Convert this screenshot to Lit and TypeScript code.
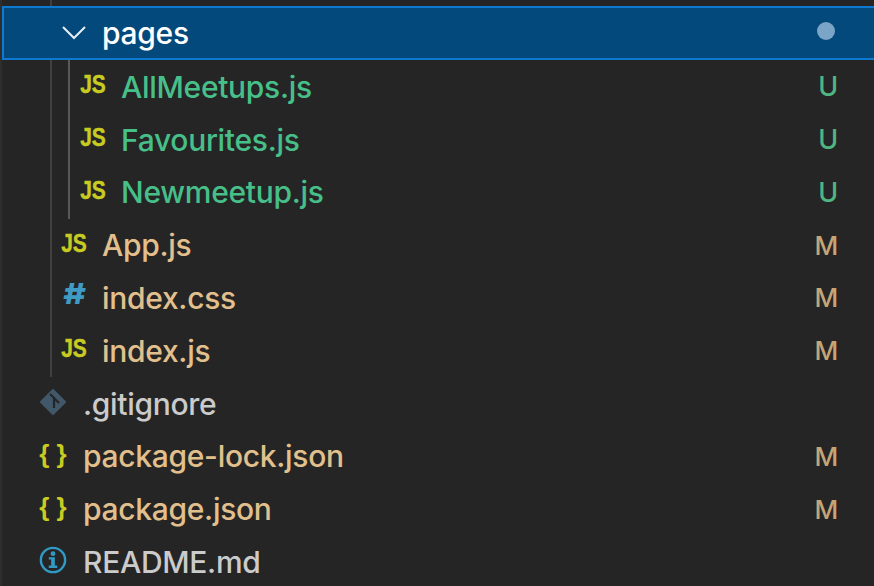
import { LitElement, html, css, nothing } from 'lit';
import { customElement } from 'lit/decorators.js';

type Row = { name: string; icon: string; tone: string; badge?: string; pad: number };

const inner: Row[] = [
  { name: 'AllMeetups.js', icon: 'js', tone: 'added', badge: 'U', pad: 78 },
  { name: 'Favourites.js', icon: 'js', tone: 'added', badge: 'U', pad: 78 },
  { name: 'Newmeetup.js', icon: 'js', tone: 'added', badge: 'U', pad: 78 },
];
const outer: Row[] = [
  { name: 'App.js', icon: 'js', tone: 'changed', badge: 'M', pad: 59 },
  { name: 'index.css', icon: 'hash', tone: 'changed', badge: 'M', pad: 59 },
  { name: 'index.js', icon: 'js', tone: 'changed', badge: 'M', pad: 59 },
];
const root: Row[] = [
  { name: '.gitignore', icon: 'git', tone: 'plain', pad: 38 },
  { name: 'package-lock.json', icon: 'json', tone: 'changed', badge: 'M', pad: 38 },
  { name: 'package.json', icon: 'json', tone: 'changed', badge: 'M', pad: 38 },
  { name: 'README.md', icon: 'info', tone: 'plain', pad: 38 },
];

@customElement('app-root')
export class AppRoot extends LitElement {
  static styles = css`
    :host {
      display: block;
      width: 874px;
      height: 586px;
      overflow: hidden;
      background: #252526;
      font-family: Inter, 'Noto Sans', sans-serif;
    }
    .tree {
      height: 586px;
      box-sizing: border-box;
      border-left: 2px solid #2e2e2f;
      padding-top: 6px;
      position: relative;
    }
    .group {
      position: relative;
    }
    .group::before {
      content: '';
      position: absolute;
      top: 0;
      bottom: 0;
      width: 2px;
      background: #404041;
    }
    .outer::before {
      left: 48px;
      top: -6px;
    }
    .inner::before {
      left: 66px;
      background: #585858;
    }
    .row {
      height: 52.8px;
      box-sizing: border-box;
      display: flex;
      align-items: center;
      padding-right: 36px;
      font-size: 30px;
      font-weight: 450;
      letter-spacing: -0.3px;
    }
    .selected {
      position: relative;
      z-index: 1;
      height: 54px;
      margin-bottom: 0.4px;
      border: 2px solid #0e79d0;
      border-right: 0;
      background: #04497b;
      color: #fff;
      padding-left: 57px;
    }
    .chevron {
      width: 26px;
      height: 16px;
      margin-right: 15px;
      fill: none;
      stroke: #e8eef3;
      stroke-width: 2;
    }
    .icon {
      width: 28px;
      height: 36px;
      margin-right: 13px;
      display: flex;
      align-items: center;
      justify-content: center;
      flex: none;
      position: relative;
      top: -2px;
      left: -1px;
      white-space: nowrap;
    }
    .top-level .icon {
      margin-right: 15px;
    }
    .js {
      color: #c8cc22;
      font: 700 25px 'Liberation Sans', sans-serif;
      letter-spacing: -0.5px;
      transform: scaleX(0.84);
      -webkit-text-stroke: 0.4px #c8cc22;
    }
    .hash {
      color: #3f9ac4;
      font: 800 29px Inter, sans-serif;
      transform: translateY(-2px) scaleX(1.2);
    }
    .json {
      color: #c8cc22;
      font: 700 26px 'Liberation Sans', sans-serif;
      letter-spacing: 0;
    }
    .name {
      flex: 1;
      white-space: nowrap;
    }
    .added { color: #47bf89; }
    .changed { color: #e2c08d; }
    .plain { color: #cbcbcb; }
    .badge {
      font-size: 26px;
      font-weight: 500;
    }
    .badge.U { color: #4fb581; font-size: 27px; }
    .badge.M { color: #c5a576; }
    .dot {
      width: 18px;
      height: 18px;
      border-radius: 50%;
      background: #7ba5c6;
      margin: 0 3px 4px 0;
    }
  `;

  renderIcon(kind: string) {
    if (kind === 'js') return html`<span class="js">JS</span>`;
    if (kind === 'hash') return html`<span class="hash">#</span>`;
    if (kind === 'json') return html`<span class="json">{ }</span>`;
    if (kind === 'git') {
      return html`<svg width="28" height="28" viewBox="0 0 28 28">
        <path d="M14 2 L26 14 L14 26 L2 14 Z" fill="#41586a" stroke="#41586a" stroke-width="2" stroke-linejoin="round" />
        <path d="M11 6 L20 15 M15 10 V20" stroke="#252526" stroke-width="2.2" fill="none" />
      </svg>`;
    }
    return html`<svg width="30" height="30" viewBox="0 0 30 30">
      <circle cx="15" cy="15" r="13" fill="none" stroke="#3099c4" stroke-width="2.6" />
      <circle cx="15" cy="8.2" r="2.6" fill="#3099c4" />
      <path d="M10.5 12 H17 V21 H19.5 V23.5 H10.5 V21 H13 V14.5 H10.5 Z" fill="#3099c4" />
    </svg>`;
  }

  renderRow(r: Row, top = false) {
    return html`<div class="row ${top ? 'top-level' : ''}" style="padding-left:${r.pad}px">
      <span class="icon">${this.renderIcon(r.icon)}</span>
      <span class="name ${r.tone}">${r.name}</span>
      ${r.badge ? html`<span class="badge ${r.badge}">${r.badge}</span>` : nothing}
    </div>`;
  }

  render() {
    return html`
      <div class="tree">
        <div class="group outer">
          <div class="row selected">
            <svg class="chevron" viewBox="0 0 26 16"><path d="M2 2 L13 13 L24 2" /></svg>
            <span class="name">pages</span>
            <span class="dot"></span>
          </div>
          <div class="group inner">${inner.map((r) => this.renderRow(r))}</div>
          ${outer.map((r) => this.renderRow(r))}
        </div>
        ${root.map((r) => this.renderRow(r, true))}
      </div>
    `;
  }
}
